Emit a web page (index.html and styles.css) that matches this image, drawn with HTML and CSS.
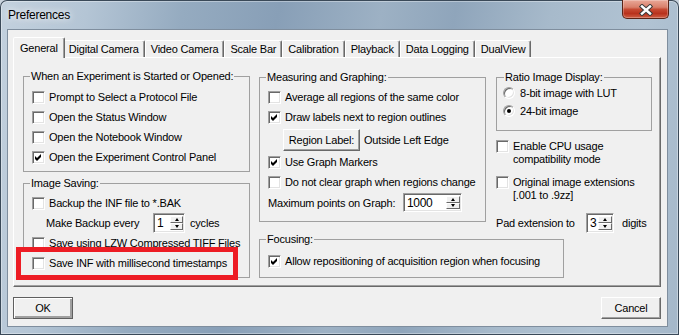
FILE: index.html
```html
<!DOCTYPE html>
<html>
<head>
<meta charset="utf-8">
<title>Preferences</title>
<link rel="stylesheet" href="styles.css">
</head>
<body>
<div class="window">
  <div class="titlebar">
    <span class="title">Preferences</span>
    <span class="close">
      <svg width="14" height="12" viewBox="0 0 14 12"><path d="M3 2.5 L11 9.5 M11 2.5 L3 9.5" stroke="#3a3a3a" stroke-width="4.4" stroke-linecap="square"/><path d="M3 2.5 L11 9.5 M11 2.5 L3 9.5" stroke="#ffffff" stroke-width="2.4" stroke-linecap="square"/></svg>
    </span>
  </div>
  <div class="client">
    <div class="tabs">
      <span class="tab sel">General</span>
      <span class="tab">Digital Camera</span>
      <span class="tab">Video Camera</span>
      <span class="tab">Scale Bar</span>
      <span class="tab">Calibration</span>
      <span class="tab">Playback</span>
      <span class="tab">Data Logging</span>
      <span class="tab">DualView</span>
    </div>
    <div class="panel">
      <div class="col1">
        <fieldset class="grp g-exp">
          <legend>When an Experiment is Started or Opened:</legend>
          <div class="row"><span class="cb"></span><span>Prompt to Select a Protocol File</span></div>
          <div class="row"><span class="cb"></span><span>Open the Status Window</span></div>
          <div class="row"><span class="cb"></span><span>Open the Notebook Window</span></div>
          <div class="row"><span class="cb"><svg class="ck" width="11" height="11" viewBox="0 0 11 11"><path d="M2 4 L4 6 L8 2 L8 5 L4 9 L2 7 Z" fill="#000"/></svg></span><span>Open the Experiment Control Panel</span></div>
        </fieldset>
        <fieldset class="grp g-img">
          <legend>Image Saving:</legend>
          <div class="row"><span class="cb"></span><span>Backup the INF file to *.BAK</span></div>
          <div class="row indent">
            <span class="lbl lbl-backup">Make Backup every</span>
            <span class="spin s1"><span class="val">1</span><span class="arrows"><span class="arr"><i class="up"></i></span><span class="arr"><i class="dn"></i></span></span></span>
            <span class="after-spin">cycles</span>
          </div>
          <div class="row"><span class="cb"></span><span>Save using LZW Compressed TIFF Files</span></div>
          <div class="row hl"><span class="cb"></span><span>Save INF with millisecond timestamps</span></div>
        </fieldset>
      </div>
      <div class="right">
        <div class="top">
          <fieldset class="grp g-meas">
            <legend>Measuring and Graphing:</legend>
            <div class="row"><span class="cb"></span><span>Average all regions of the same color</span></div>
            <div class="row"><span class="cb"><svg class="ck" width="11" height="11" viewBox="0 0 11 11"><path d="M2 4 L4 6 L8 2 L8 5 L4 9 L2 7 Z" fill="#000"/></svg></span><span>Draw labels next to region outlines</span></div>
            <div class="row btnrow"><button class="btn region">Region Label:</button><span>Outside Left Edge</span></div>
            <div class="row"><span class="cb"><svg class="ck" width="11" height="11" viewBox="0 0 11 11"><path d="M2 4 L4 6 L8 2 L8 5 L4 9 L2 7 Z" fill="#000"/></svg></span><span>Use Graph Markers</span></div>
            <div class="row"><span class="cb"></span><span>Do not clear graph when regions change</span></div>
            <div class="row spinrow">
              <span class="lbl lbl-max">Maximum points on Graph:</span>
              <span class="spin s2"><span class="val">1000</span><span class="arrows"><span class="arr"><i class="up"></i></span><span class="arr"><i class="dn"></i></span></span></span>
            </div>
          </fieldset>
          <div class="col3">
            <fieldset class="grp g-ratio">
              <legend>Ratio Image Display:</legend>
              <div class="rrow"><span class="rb"></span><span>8-bit image with LUT</span></div>
              <div class="rrow"><span class="rb on"></span><span>24-bit image</span></div>
            </fieldset>
            <div class="row2 first"><span class="cb"></span><span>Enable CPU usage<br>compatibility mode</span></div>
            <div class="row2"><span class="cb"></span><span>Original image extensions<br>[.001 to .9zz]</span></div>
            <div class="row pad">
              <span class="lbl lbl-pad">Pad extension to</span>
              <span class="spin s3"><span class="val">3</span><span class="arrows"><span class="arr"><i class="up"></i></span><span class="arr"><i class="dn"></i></span></span></span>
              <span class="after-pad">digits</span>
            </div>
          </div>
        </div>
        <fieldset class="grp g-focus">
          <legend>Focusing:</legend>
          <div class="row"><span class="cb"><svg class="ck" width="11" height="11" viewBox="0 0 11 11"><path d="M2 4 L4 6 L8 2 L8 5 L4 9 L2 7 Z" fill="#000"/></svg></span><span>Allow repositioning of acquisition region when focusing</span></div>
        </fieldset>
      </div>
    </div>
    <div class="buttons">
      <button class="btn default">OK</button>
      <button class="btn">Cancel</button>
    </div>
  </div>
</div>
</body>
</html>
```
FILE: styles.css
```css
* { box-sizing: border-box; }
html, body { margin: 0; padding: 0; }
body {
  width: 679px;
  height: 335px;
  overflow: hidden;
  background: #c9d3dd;
  font-family: "Liberation Sans", Arial, sans-serif;
  font-size: 11px;
  letter-spacing: -0.2px;
  color: #000;
}

.window {
  width: 679px;
  height: 335px;
  padding: 0 11px 8px 7px;
  display: flex;
  flex-direction: column;
  border-radius: 7px 7px 0 0;
  background: linear-gradient(100deg, #c3d1de 0%, #b4c5d5 12%, #95abc0 25%, #889fb7 38%, #9db1c4 52%, #8fa5bb 62%, #a7bacb 75%, #b1c3d3 88%, #a4b7c9 100%);
  box-shadow: inset 0 0 0 1px #3a4958, inset 0 0 0 2px rgba(255,255,255,0.35);
}

.titlebar {
  height: 29px;
  display: flex;
  align-items: flex-start;
}
.title {
  padding-left: 1px;
  line-height: 30px;
  font-size: 12px;
  letter-spacing: -0.25px;
  text-shadow: 0 0 6px rgba(255,255,255,0.9), 0 0 12px rgba(255,255,255,0.7);
}
.close {
  margin-left: auto;
  margin-right: -1px;
  width: 47px;
  height: 19px;
  display: flex;
  align-items: center;
  justify-content: center;
  padding-top: 1px;
  border: 1px solid #5a2417;
  border-top: 0;
  border-radius: 0 0 5px 5px;
  background: linear-gradient(180deg, #e9a898 0%, #d9806b 40%, #c64a33 52%, #b8321d 75%, #cf5f45 100%);
  box-shadow: inset 0 0 0 1px rgba(255,255,255,0.25);
}
.close svg { display: block; }

.client {
  flex: 1;
  background: #f0f0f0;
  border: 1px solid #7f8e9e;
  padding: 7px 6px 7px 5px;
  display: flex;
  flex-direction: column;
}

.tabs {
  display: flex;
  align-items: flex-end;
  height: 20px;
}
.tab {
  height: 17px;
  padding: 0 5px;
  display: flex;
  align-items: center;
  white-space: nowrap;
  background: #f0f0f0;
  border: 1px solid;
  border-bottom: 0;
  border-color: #fff #696969 transparent #fff;
  border-radius: 2px 2px 0 0;
  box-shadow: inset -1px 0 #a0a0a0;
}
.tab.sel {
  height: 21px;
  margin-bottom: -1px;
  margin-right: -2px;
  padding: 0 6px 1px;
  position: relative;
  z-index: 1;
}

.panel {
  flex: 1;
  display: flex;
  gap: 9px;
  padding: 12px 8px 0 9px;
  border: 1px solid;
  border-color: #fff #696969 #696969 #fff;
  box-shadow: inset -1px -1px #a0a0a0;
}
.col1 { width: 227px; display: flex; flex-direction: column; }
.right { width: 393px; margin-top: 1px; display: flex; flex-direction: column; }
.top { display: flex; gap: 10px; align-items: flex-start; }
.col3 { width: 156px; display: flex; flex-direction: column; }

.grp {
  margin: 0;
  min-width: 0;
  border: 1px solid #a0a0a0;
  padding: 4px 0 4px 8px;
}
.grp legend {
  padding: 0 1px;
  margin-left: -2px;
  height: 13px;
  line-height: 13px;
  white-space: nowrap;
}
.g-exp { width: 227px; }
.g-img { width: 227px; margin-top: 5px; padding: 3px 0 4px 8px; }
.g-meas { width: 227px; padding: 3px 0 8px 8px; }
.g-ratio { width: 156px; padding: 0 0 10px 6px; }
.g-ratio legend { margin-left: 1px; }
.g-focus { width: 305px; padding: 5px 0 6px 8px; }

.row {
  display: flex;
  align-items: center;
  height: 20px;
  white-space: nowrap;
}
.row.indent { padding-left: 14px; }
.row.btnrow { height: 25px; padding-left: 15px; }
.row.spinrow { height: 21px; }
.row.pad { margin-top: 11px; }

.cb {
  flex: none;
  width: 13px;
  height: 13px;
  margin-right: 4px;
  background: #fff;
  border: 1px solid;
  border-color: #a0a0a0 #fff #fff #a0a0a0;
  box-shadow: inset 1px 1px #696969, inset -1px -1px #e3e3e3;
}
.ck { display: block; }

.rrow {
  display: flex;
  align-items: center;
  height: 18px;
  white-space: nowrap;
}
.rb {
  flex: none;
  width: 12px;
  height: 12px;
  margin-right: 5px;
  border-radius: 50%;
  background: #fff;
  border: 1px solid;
  border-color: #a0a0a0 #fff #fff #a0a0a0;
  box-shadow: inset 1px 1px #696969, inset -1px -1px #e3e3e3;
  display: flex;
  align-items: center;
  justify-content: center;
}
.rb.on::after {
  content: "";
  width: 4px;
  height: 4px;
  border-radius: 50%;
  background: #000;
}

.row2 {
  display: flex;
  align-items: flex-start;
  line-height: 13px;
  margin-top: 10px;
  white-space: nowrap;
}
.row2.first { margin-top: 9px; }

.lbl { flex: none; }
.lbl-backup { width: 107px; }
.lbl-max { width: 135px; }
.lbl-pad { width: 90px; }
.after-spin { margin-left: 5px; }
.after-pad { margin-left: 8px; }

.spin {
  flex: none;
  display: flex;
  height: 20px;
  padding: 2px 1px 2px 2px;
  background: #fff;
  border: 1px solid;
  border-color: #a0a0a0 #fff #fff #a0a0a0;
  box-shadow: inset 1px 1px #696969, inset -1px -1px #e3e3e3;
}
.spin .val {
  flex: 1;
  display: flex;
  align-items: center;
  padding-left: 1px;
  font-size: 12px;
  letter-spacing: -0.3px;
}
.spin .arrows {
  display: flex;
  flex-direction: column;
  width: 13px;
}
.s1 { width: 32px; }
.s2 { width: 59px; height: 19px; }
.s2 .arrows { width: 14px; }
.s3 { width: 28px; }
.s3 .arrows { width: 14px; }
.arr {
  flex: 1;
  display: flex;
  align-items: center;
  justify-content: center;
  background: #f0f0f0;
  border: 1px solid;
  border-color: #fff #696969 #696969 #fff;
}
.arr i {
  display: block;
  width: 0;
  height: 0;
  border-left: 2.5px solid transparent;
  border-right: 2.5px solid transparent;
}
.arr i.up { border-bottom: 3px solid #000; }
.arr i.dn { border-top: 3px solid #000; }

.hl { position: relative; z-index: 1; }
.hl::before {
  content: "";
  position: absolute;
  top: -6px;
  right: 11px;
  bottom: -7px;
  left: -16px;
  border: 5px solid #ed1c24;
  background: #f0f0f0;
  z-index: -1;
}

.btn {
  font: inherit;
  letter-spacing: inherit;
  color: #000;
  width: 60px;
  height: 22px;
  padding: 0;
  background: #f0f0f0;
  border: 1px solid;
  border-color: #fff #696969 #696969 #fff;
  box-shadow: inset -1px -1px #a0a0a0;
}
.btn.default {
  border-color: #5f5f5f;
  box-shadow: inset 1px 1px #fff, inset -2px -2px #a0a0a0;
}
.btn.region {
  width: 77px;
  margin-right: 4px;
}
.buttons {
  display: flex;
  justify-content: space-between;
  margin-top: 10px;
}
```
